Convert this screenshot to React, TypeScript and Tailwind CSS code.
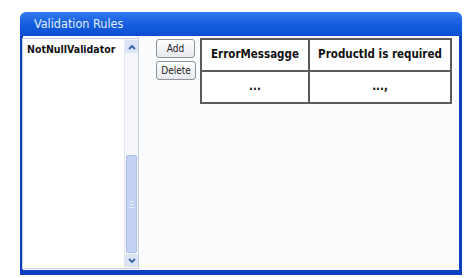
export default function App() {
  return (
    <div className="w-[474px] h-[278px] bg-white pt-[12px] pl-[20px]" style={{ fontFamily: '"DejaVu Sans Condensed", "DejaVu Sans", Verdana, sans-serif' }}>
      <div className="w-[442px] h-[263px] flex flex-col rounded-t-[6px] overflow-hidden">
        {/* Title bar */}
        <div className="h-[24px] shrink-0 flex items-center pl-[14px] bg-gradient-to-b from-[#3479ee] via-[#155ee0] to-[#0b4fd2] text-[#e2edff] text-[12.5px]">
          Validation Rules
        </div>
        {/* Body */}
        <div className="flex-1 flex border-x-[3px] border-b-[5px] border-[#0c3fc0] bg-[#fbfcfe] pt-[2px]">
          {/* List */}
          <div className="w-[117px] h-[231px] flex border border-[#c9cfd8] bg-white -ml-[1px]">
            <div className="flex-1 pl-[4px] pt-[3px] text-[10.5px] font-bold text-[#111]">NotNullValidator</div>
            <div className="w-[14px] flex flex-col bg-[#f4f6fb] border-l border-[#e3e7ef]">
              <div className="h-[13px] mt-[1px] flex items-center justify-center bg-[#dbe4f7] rounded-[2px]">
                <svg width="8" height="6" viewBox="0 0 8 6">
                  <path d="M1 5 L4 2 L7 5" fill="none" stroke="#3b5fa8" strokeWidth="1.8" />
                </svg>
              </div>
              <div className="h-[102px]" />
              <div className="flex-1 mx-[1px] bg-[#c2d1f5] border border-[#aebfe9] rounded-[2px] flex items-center justify-center">
                <div className="flex flex-col gap-[2px]">
                  <div className="w-[5px] h-[1px] bg-[#e6ecfb]" />
                  <div className="w-[5px] h-[1px] bg-[#e6ecfb]" />
                  <div className="w-[5px] h-[1px] bg-[#e6ecfb]" />
                </div>
              </div>
              <div className="h-[13px] my-[1px] flex items-center justify-center bg-[#dbe4f7] rounded-[2px]">
                <svg width="8" height="6" viewBox="0 0 8 6">
                  <path d="M1 1 L4 4 L7 1" fill="none" stroke="#3b5fa8" strokeWidth="1.8" />
                </svg>
              </div>
            </div>
          </div>
          {/* Buttons */}
          <div className="ml-[17px] flex flex-col gap-[3px] pt-[1px]">
            <button className="w-[39px] h-[19px] rounded-[3px] border border-[#8d939c] bg-gradient-to-b from-white to-[#e8e9ec] text-[10px] text-[#222]">Add</button>
            <button className="w-[40px] h-[19px] rounded-[3px] border border-[#8d939c] bg-gradient-to-b from-white to-[#e8e9ec] text-[10px] text-[#222]">Delete</button>
          </div>
          {/* Table */}
          <div className="ml-[4px]">
            <div className="grid grid-cols-[108px_140px] border-2 border-[#5a5a5a] bg-white text-[11.5px] font-bold text-[#111]">
              <div className="h-[32px] flex items-center justify-center border-r-2 border-b-2 border-[#5a5a5a]">ErrorMessagge</div>
              <div className="h-[32px] flex items-center justify-center border-b-2 border-[#5a5a5a]">ProductId is required</div>
              <div className="h-[30px] flex items-center justify-center border-r-2 border-[#5a5a5a]">...</div>
              <div className="h-[30px] flex items-center justify-center">...,</div>
            </div>
          </div>
        </div>
      </div>
    </div>
  )
}
